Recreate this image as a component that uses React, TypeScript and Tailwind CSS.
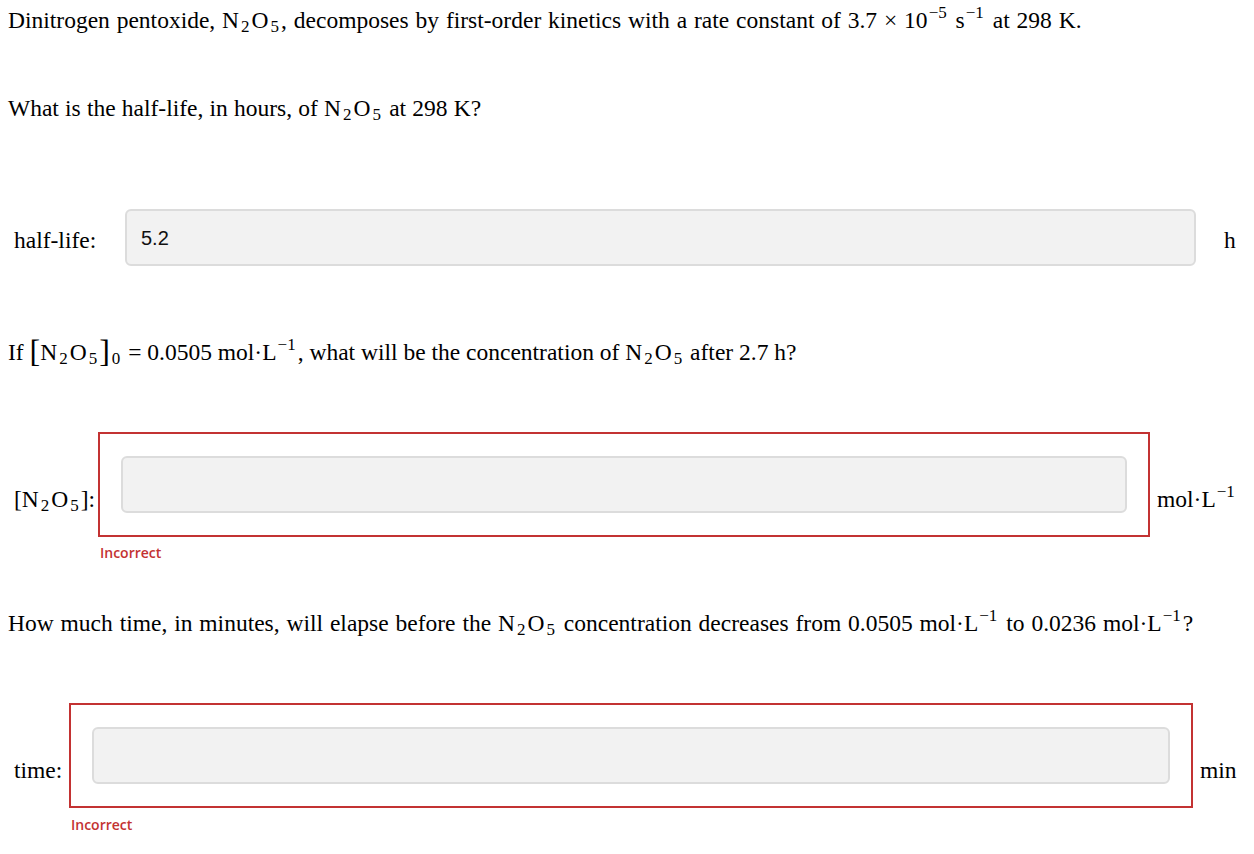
const serif = "font-['Liberation_Serif','Times_New_Roman',serif]";

const Sub = ({ children }: { children: React.ReactNode }) => (
  <sub className="text-[17px] relative top-[4px] align-baseline mx-[2px]">{children}</sub>
);

const Sup = ({ children }: { children: React.ReactNode }) => (
  <sup className="text-[17px] relative -top-[10px] align-baseline ml-[1px] mr-[2px]">{children}</sup>
);

const N2O5 = () => (
  <span>
    N<Sub>2</Sub>O<Sub>5</Sub>
  </span>
);

const Answer = ({ value }: { value?: string }) => (
  <div className="flex-1 h-[57px] rounded-[6px] border-2 border-[#dcdcdc] bg-[#f2f2f2] px-[14px] pt-[12px] text-[20px] text-[#111] font-['Liberation_Sans',Arial,sans-serif]">
    {value}
  </div>
);

export default function App() {
  return (
    <div className={`${serif} text-[23.5px] [word-spacing:1px] text-black bg-white w-[1254px] h-[854px] overflow-hidden`}>
      <p className="pl-[8px] pt-[6px] leading-[28px]">
        Dinitrogen pentoxide, <N2O5 />, decomposes by first-order kinetics with a rate constant of 3.7 × 10
        <Sup>−5</Sup> s<Sup>−1</Sup> at 298 K.
      </p>

      <p className="pl-[8px] mt-[60px] leading-[28px] [word-spacing:0.3px]">
        What is the half-life, in hours, of <N2O5 /> at 298 K?
      </p>

      <div className="flex items-center mt-[87px] h-[57px]">
        <span className="w-[125px] pl-[14px] pt-[6px]">half-life:</span>
        <Answer value="5.2" />
        <span className="w-[58px] pl-[28px] pt-[6px]">h</span>
      </div>

      <p className="pl-[8px] mt-[72px] h-[28px] leading-[28px] [word-spacing:0px]">
        If{' '}
        <span className="inline-flex items-baseline">
          <span className="text-[32px] leading-[20px] relative top-[2px] font-light">[</span>
          <N2O5 />
          <span className="text-[32px] leading-[20px] relative top-[2px] font-light">]</span>
          <Sub>0</Sub>
        </span>{' '}
        = 0.0505 mol·L<Sup>−1</Sup>, what will be the concentration of <N2O5 /> after 2.7 h?
      </p>

      <div className="mt-[66px]">
        <div className="flex items-center">
          <span className="w-[98px] pl-[14px] pt-[30px]">
            [<N2O5 />]:
          </span>
          <div className="flex-1 flex items-center h-[105px] border-2 border-[#c33232] pl-[21px] pr-[21px]">
            <Answer />
          </div>
          <span className="w-[104px] pl-[7px] pt-[30px]">
            mol·L<Sup>−1</Sup>
          </span>
        </div>
        <div className="pl-[100px] mt-[5px] text-[14px] font-semibold text-[#c33232] font-['Open_Sans',sans-serif]">
          Incorrect
        </div>
      </div>

      <p className="pl-[8px] mt-[46px] leading-[28px]">
        How much time, in minutes, will elapse before the <N2O5 /> concentration decreases from 0.0505 mol·L
        <Sup>−1</Sup> to 0.0236 mol·L<Sup>−1</Sup>?
      </p>

      <div className="mt-[66px]">
        <div className="flex items-center">
          <span className="w-[69px] pl-[14px] pt-[30px]">time:</span>
          <div className="flex-1 flex items-center h-[105px] border-2 border-[#c33232] pl-[21px] pr-[21px]">
            <Answer />
          </div>
          <span className="w-[61px] pl-[7px] pt-[30px]">min</span>
        </div>
        <div className="pl-[71px] mt-[6px] text-[14px] font-semibold text-[#c33232] font-['Open_Sans',sans-serif]">
          Incorrect
        </div>
      </div>
    </div>
  );
}
